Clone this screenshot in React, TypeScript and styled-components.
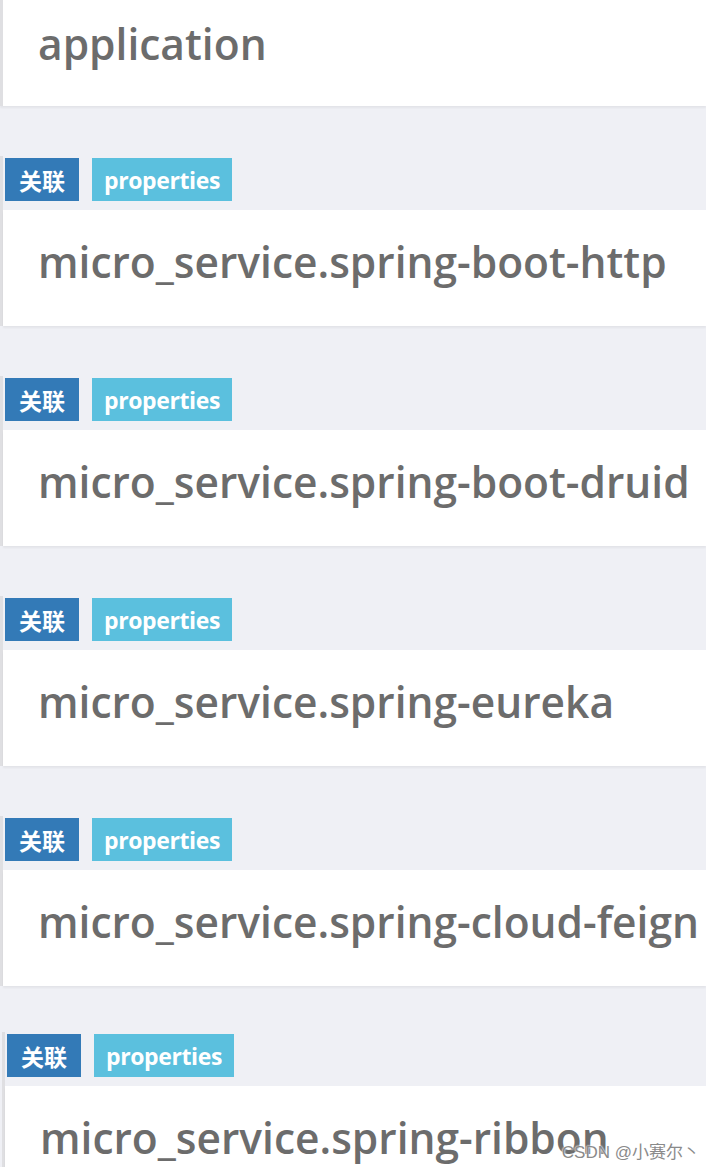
import React, { ReactElement } from 'react';
import styled, { createGlobalStyle } from 'styled-components';

const GlobalStyle = createGlobalStyle`
  html, body {
    margin: 0;
    padding: 0;
    background: #eff0f5;
    overflow: hidden;
  }
  body {
    font-family: "Open Sans", "Noto Sans CJK SC", sans-serif;
  }
`;

const Page = styled.div`
  position: relative;
  width: 706px;
  height: 1167px;
  overflow: hidden;
  display: flex;
  flex-direction: column;
`;

const Group = styled.section<{ $shift?: number; $gap?: number }>`
  display: flex;
  flex-direction: column;
  margin-top: ${({ $gap }) => $gap ?? 50}px;
  margin-left: ${({ $shift }) => $shift ?? 0}px;
  border-left: 3px solid #dfdfe2;
`;

const TagRow = styled.div`
  display: flex;
  gap: 13px;
  padding: 2px 0 9px 2px;
`;

const Tag = styled.span<{ $kind: 'primary' | 'info' }>`
  display: inline-flex;
  align-items: center;
  justify-content: center;
  height: 43px;
  width: ${({ $kind }) => ($kind === 'primary' ? 74 : 140)}px;
  background: ${({ $kind }) => ($kind === 'primary' ? '#337ab7' : '#5bc0de')};
  color: #fff;
  font-weight: 700;
  font-size: ${({ $kind }) => ($kind === 'primary' ? 23 : 23)}px;
  letter-spacing: ${({ $kind }) => ($kind === 'primary' ? 0 : -0.4)}px;
  box-sizing: border-box;
  white-space: nowrap;
`;

const Panel = styled.div<{ $first?: boolean }>`
  background: #fff;
  padding: ${({ $first }) => ($first ? '17px 0 35px 35px' : '25px 0 37px 35px')};
  box-shadow: 0 2px 2px rgba(0, 0, 0, 0.05);
  font-size: 42.5px;
  font-weight: 600;
  line-height: 54px;
  color: #6c6c6c;
  white-space: nowrap;
`;

const FirstPanel = styled(Panel)`
  border-left: 3px solid #dfdfe2;
`;

const Watermark = styled.div`
  position: absolute;
  right: 6px;
  top: 1138px;
  font-family: "Liberation Sans", "Noto Sans CJK SC", sans-serif;
  font-size: 17px;
  color: #8a8a8a;
  text-shadow: 0 0 2px #fff, 0 0 2px #fff;
`;

const services = [
  'micro_service.spring-boot-http',
  'micro_service.spring-boot-druid',
  'micro_service.spring-eureka',
  'micro_service.spring-cloud-feign',
  'micro_service.spring-ribbon',
];

const App = (): ReactElement => (
  <>
    <GlobalStyle />
    <Page>
      <FirstPanel $first>application</FirstPanel>
      {services.map((name, index) => {
        const last = index === services.length - 1;
        return (
          <Group key={name} $gap={last ? 46 : 50} $shift={last ? 2 : 0}>
            <TagRow>
              <Tag $kind="primary">关联</Tag>
              <Tag $kind="info">properties</Tag>
            </TagRow>
            <Panel>{name}</Panel>
          </Group>
        );
      })}
      <Watermark>CSDN @小赛尔丶</Watermark>
    </Page>
  </>
);

export default App;
